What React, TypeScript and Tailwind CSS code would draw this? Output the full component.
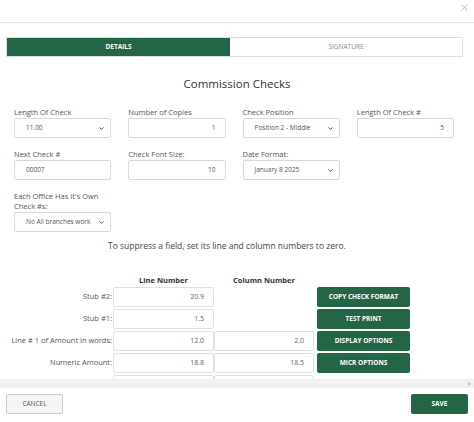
import { X, ChevronDown } from "lucide-react";

const font = { fontFamily: '"Open Sans", "Liberation Sans", sans-serif' };

function Field({ label, value, select }: { label: string; value: string; select?: boolean }) {
  return (
    <div className="flex flex-col">
      <label className="text-[7.5px] leading-[10px] text-[#555] mb-[1px] whitespace-pre-line">{label}</label>
      {select ? (
        <div className="h-[20px] border border-[#d9d9d9] rounded-[2px] flex items-center pl-[11px] pr-[5px] text-[6.5px] text-[#555] whitespace-nowrap">
          <span className="flex-1">{value}</span>
          <ChevronDown className="w-[7px] h-[7px] text-[#444]" strokeWidth={3} />
        </div>
      ) : (
        <div className="h-[20px] border border-[#d9d9d9] rounded-[2px] flex items-center justify-end pr-[9px] text-[6.5px] text-[#555]">
          {value}
        </div>
      )}
    </div>
  );
}

function Field2({ label, value }: { label: string; value: string }) {
  return (
    <div className="flex flex-col">
      <label className="text-[7.5px] leading-[10px] text-[#555] mb-[1px]">{label}</label>
      <div className="h-[20px] border border-[#d9d9d9] rounded-[2px] flex items-center pl-[11px] text-[6.5px] text-[#555]">
        {value}
      </div>
    </div>
  );
}

const rows = [
  { label: "Stub #2:", line: "20.9", col: "", btn: "COPY CHECK FORMAT" },
  { label: "Stub #1:", line: "1.5", col: "", btn: "TEST PRINT" },
  { label: "Line # 1 of Amount in words:", line: "12.0", col: "2.0", btn: "DISPLAY OPTIONS" },
  { label: "Numeric Amount:", line: "18.8", col: "18.5", btn: "MICR OPTIONS" },
  { label: "", line: "", col: " ", btn: "" },
];

function Box({ value }: { value: string }) {
  return (
    <div className="h-[20px] border border-[#e0e0e0] rounded-[2px] flex items-center justify-end pr-[9px] text-[7px] text-[#666]">
      {value}
    </div>
  );
}

export default function App() {
  return (
    <div className="w-[474px] h-[422px] bg-white flex flex-col overflow-hidden" style={font}>
      <div className="h-[23px] border-b border-[#e6e6e6] flex items-start justify-end pr-[4px] pt-[2px] shrink-0">
        <X className="w-[11px] h-[11px] text-[#999]" strokeWidth={1.5} />
      </div>

      <div className="h-[356px] overflow-hidden shrink-0 pt-[14px]">
        <div className="ml-[6px] w-[457px] h-[20px] border border-[#ddd] flex text-[6.5px]">
          <div className="w-[223px] bg-[#236646] text-white font-bold flex items-center justify-center">DETAILS</div>
          <div className="flex-1 text-[#888] flex items-center justify-center">SIGNATURE</div>
        </div>

        <h1 className="text-center text-[11.5px] text-[#333] mt-[17px] leading-[20px]">Commission Checks</h1>

        <div className="mx-[14px] w-[440px] grid grid-cols-4 gap-x-[17px] gap-y-[11px] mt-[13px]">
          <Field label="Length Of Check" value="11.00" select />
          <Field label="Number of Copies" value="1" />
          <Field label="Check Position" value="Position 2 - Middle" select />
          <Field label="Length Of Check #" value="5" />
          <Field2 label="Next Check #" value="00007" />
          <Field label="Check Font Size:" value="10" />
          <Field label="Date Format:" value="January 8 2025" select />
          <div />
          <Field label={"Each Office Has It's Own\nCheck #s:"} value="No All branches work" select />
        </div>

        <p className="text-[8.5px] text-[#444] ml-[108px] mt-[9px] leading-[10px] whitespace-nowrap">
          To suppress a field, set its line and column numbers to zero.
        </p>

        <div className="mt-[27px] grid grid-cols-[113px_101px_100px_3px_93px] gap-y-[2px]">
          <div />
          <div className="text-center text-[7.5px] font-bold text-[#333] leading-[7px] -mt-[1px] mb-[1px]">Line Number</div>
          <div className="text-center text-[7.5px] font-bold text-[#333] leading-[7px] -mt-[1px] mb-[1px]">Column Number</div>
          <div />
          <div />
          {rows.map((r, i) => (
            <div key={i} className="contents">
              <div className="h-[20px] flex items-center justify-end pr-[1px] text-[7.5px] text-[#555] whitespace-nowrap">{r.label}</div>
              <Box value={r.line} />
              {r.col ? <Box value={r.col} /> : <div />}
              <div />
              {r.btn ? (
                <div className="h-[20px] bg-[#236646] rounded-[2px] text-white font-bold text-[6.5px] flex items-center justify-center">{r.btn}</div>
              ) : (
                <div />
              )}
            </div>
          ))}
        </div>
      </div>

      <div className="h-[9px] bg-[#f1f1f1] shrink-0 flex items-center justify-end pr-[3px]">
        <div className="w-0 h-0 border-y-[2px] border-y-transparent border-l-[3px] border-l-[#bbb]" />
      </div>

      <div className="flex-1 flex items-center justify-between px-[6px] pb-[2px]">
        <div className="w-[57px] h-[20px] border border-[#ccc] bg-[#f5f5f5] rounded-[2px] text-[6.5px] text-[#555] flex items-center justify-center">CANCEL</div>
        <div className="w-[57px] h-[20px] bg-[#236646] rounded-[2px] text-[6.5px] text-white font-bold flex items-center justify-center">SAVE</div>
      </div>
    </div>
  );
}
